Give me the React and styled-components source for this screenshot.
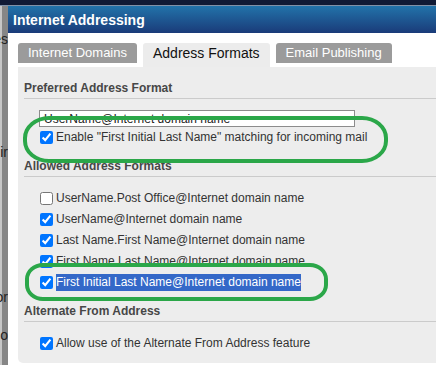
import React from 'react';
import styled, { createGlobalStyle } from 'styled-components';

const GlobalStyle = createGlobalStyle`
  html, body { margin: 0; padding: 0; background: #ffffff; }
  body { font-family: "Liberation Sans", Arial, sans-serif; }
`;

const Page = styled.div`
  width: 436px;
  height: 365px;
  display: flex;
  flex-direction: column;
  overflow: hidden;
`;

const TopBar = styled.div`
  flex: none;
  height: 5px;
  background: #101a35;
  border-bottom: 1px solid #8191a7;
`;

const Main = styled.div`
  flex: 1;
  display: flex;
  min-height: 0;
`;

const Backdrop = styled.div`
  flex: none;
  width: 8px;
  background: linear-gradient(to right, #c6c6c6 0 2px, #868686 2px 8px);
  display: flex;
  flex-direction: column;
  align-items: flex-end;
  overflow: hidden;
`;

const BackText = styled.span`
  display: block;
  margin-top: ${(p) => p.$gap}px;
  font-size: 14px;
  line-height: 14px;
  color: #222;
  white-space: nowrap;
`;

const Dialog = styled.div`
  flex: 1;
  display: flex;
  flex-direction: column;
  min-width: 0;
`;

const Header = styled.div`
  flex: none;
  height: 27px;
  display: flex;
  align-items: center;
  padding-left: 5px;
  background: linear-gradient(#2273aa, #1a3b79);
  color: #fff;
  font-weight: bold;
  font-size: 14px;
`;

const Body = styled.div`
  flex: 1;
  display: flex;
  flex-direction: column;
  background: #fff;
  padding: 10px 0 2px 10px;
  min-height: 0;
`;

const TabRow = styled.div`
  flex: none;
  display: flex;
  gap: 6px;
  align-items: flex-start;
  height: 24px;
`;

const Tab = styled.div`
  height: ${(p) => (p.$active ? 24 : 20)}px;
  padding: 0 10px;
  line-height: 20px;
  font-size: ${(p) => (p.$active ? 14 : 13)}px;
  color: ${(p) => (p.$active ? '#111' : '#fff')};
  background: ${(p) => (p.$active ? '#ececec' : '#9b9b9b')};
  border-radius: 3px 3px 0 0;
  white-space: nowrap;
`;

const Panel = styled.div`
  position: relative;
  flex: 1;
  display: flex;
  flex-direction: column;
  gap: 10px;
  background: #ededed;
  border-bottom-left-radius: 5px;
  padding: 13px 0 0 6px;
`;

const Section = styled.section`
  display: flex;
  flex-direction: column;
`;

const Heading = styled.div`
  font-weight: bold;
  font-size: 12px;
  line-height: 16px;
  color: #474747;
  padding-bottom: 2px;
  border-bottom: 1px solid #cbcbcb;
`;

const Content = styled.div`
  margin-top: 11px;
  padding-left: 15px;
  display: flex;
  flex-direction: column;
`;

const Select = styled.div`
  box-sizing: border-box;
  width: 316px;
  height: 17px;
  display: flex;
  align-items: center;
  justify-content: space-between;
  padding: 0 5px 0 4px;
  background: #fff;
  border: 1px solid #8c8c8c;
  font-size: 12px;
  color: #222;
`;

const Row = styled.label`
  height: 21px;
  display: flex;
  align-items: center;
  gap: 3px;
  padding-left: 1px;
  font-size: 12px;
  color: #333;
  white-space: nowrap;
`;

const Check = styled.input`
  margin: 0;
  width: 13px;
  height: 13px;
  flex: none;
`;

const LabelText = styled.span`
  display: inline-block;
  line-height: 17px;
  background: ${(p) => (p.$selected ? '#3468c8' : 'transparent')};
  color: ${(p) => (p.$selected ? '#fff' : 'inherit')};
`;

const Annotation = styled.div`
  position: absolute;
  left: ${(p) => p.$left}px;
  top: ${(p) => p.$top}px;
  width: ${(p) => p.$w}px;
  height: ${(p) => p.$h}px;
  box-sizing: border-box;
  border: 4.5px solid #2ba749;
  border-radius: ${(p) => p.$r};
  pointer-events: none;
`;

const allowed = [
  { text: 'UserName.Post Office@Internet domain name', checked: false },
  { text: 'UserName@Internet domain name', checked: true },
  { text: 'Last Name.First Name@Internet domain name', checked: true },
  { text: 'First Name.Last Name@Internet domain name', checked: true },
  { text: 'First Initial Last Name@Internet domain name', checked: true, selected: true },
];

const CheckRow = ({ checked, selected, children }) => (
  <Row>
    <Check type="checkbox" defaultChecked={checked} />
    <LabelText $selected={selected}>{children}</LabelText>
  </Row>
);

export default function App() {
  return (
    <>
      <GlobalStyle />
      <Page>
        <TopBar />
        <Main>
          <Backdrop>
            <BackText $gap={26}>es</BackText>
            <BackText $gap={99}>ir</BackText>
            <BackText $gap={131}>or</BackText>
            <BackText $gap={24}>o</BackText>
          </Backdrop>
          <Dialog>
            <Header>Internet Addressing</Header>
            <Body>
              <TabRow>
                <Tab>Internet Domains</Tab>
                <Tab $active>Address Formats</Tab>
                <Tab>Email Publishing</Tab>
              </TabRow>
              <Panel>
                <Section>
                  <Heading>Preferred Address Format</Heading>
                  <Content>
                    <Select>
                      <span>UserName@Internet domain name</span>
                      <svg width="8" height="5" viewBox="0 0 8 5">
                        <path d="M0.5 0.5 L4 4 L7.5 0.5" fill="none" stroke="#999" strokeWidth="1" />
                      </svg>
                    </Select>
                    <CheckRow checked>Enable "First Initial Last Name" matching for incoming mail</CheckRow>
                  </Content>
                </Section>
                <Section>
                  <Heading>Allowed Address Formats</Heading>
                  <Content>
                    {allowed.map((a) => (
                      <CheckRow key={a.text} checked={a.checked} selected={a.selected}>
                        {a.text}
                      </CheckRow>
                    ))}
                  </Content>
                </Section>
                <Section>
                  <Heading>Alternate From Address</Heading>
                  <Content>
                    <CheckRow checked>Allow use of the Alternate From Address feature</CheckRow>
                  </Content>
                </Section>
                <Annotation $left={5} $top={49} $w={365} $h={47} $r="26px / 22px" />
                <Annotation $left={7} $top={196} $w={303} $h={38} $r="18px / 16px" />
              </Panel>
            </Body>
          </Dialog>
        </Main>
      </Page>
    </>
  );
}
